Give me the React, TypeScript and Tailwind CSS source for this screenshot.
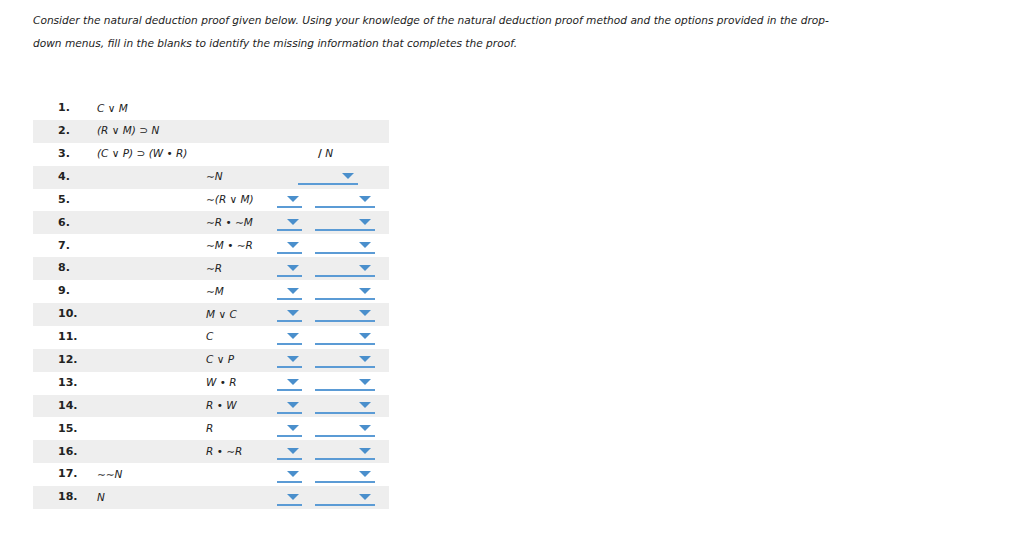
import React from 'react'

type Row = {
  n: number
  a?: string
  b?: string
  kind: 'none' | 'conclusion' | 'single' | 'pair'
}

const rows: Row[] = [
  { n: 1, a: 'C ∨ M', kind: 'none' },
  { n: 2, a: '(R ∨ M) ⊃ N', kind: 'none' },
  { n: 3, a: '(C ∨ P) ⊃ (W • R)', kind: 'conclusion' },
  { n: 4, b: '∼N', kind: 'single' },
  { n: 5, b: '∼(R ∨ M)', kind: 'pair' },
  { n: 6, b: '∼R • ∼M', kind: 'pair' },
  { n: 7, b: '∼M • ∼R', kind: 'pair' },
  { n: 8, b: '∼R', kind: 'pair' },
  { n: 9, b: '∼M', kind: 'pair' },
  { n: 10, b: 'M ∨ C', kind: 'pair' },
  { n: 11, b: 'C', kind: 'pair' },
  { n: 12, b: 'C ∨ P', kind: 'pair' },
  { n: 13, b: 'W • R', kind: 'pair' },
  { n: 14, b: 'R • W', kind: 'pair' },
  { n: 15, b: 'R', kind: 'pair' },
  { n: 16, b: 'R • ∼R', kind: 'pair' },
  { n: 17, a: '∼∼N', kind: 'pair' },
  { n: 18, a: 'N', kind: 'pair' },
]

function Dropdown({ wide, className = '' }: { wide?: boolean; className?: string }) {
  return (
    <div
      className={`flex h-[14px] mt-[2px] justify-end items-start border-b-2 border-[#5b9bd5] ${
        wide ? 'w-[60px] pr-[4px]' : 'w-[25px] pr-[3px]'
      } ${className}`}
    >
      <svg width="12" height="6" viewBox="0 0 12 6" className="mt-[2px]">
        <polygon points="0,0 12,0 6,6" fill="#4a8fcc" />
      </svg>
    </div>
  )
}

export default function App() {
  return (
    <div className="w-[1024px] h-[540px] bg-white text-[#222] font-['DejaVu_Sans',Verdana,sans-serif]">
      <div className="pt-[9px] pl-[33px] text-[10.6px] leading-[23px] italic">
        <p>
          Consider the natural deduction proof given below. Using your knowledge of the natural deduction proof method and the options provided in the drop-
        </p>
        <p>down menus, fill in the blanks to identify the missing information that completes the proof.</p>
      </div>

      <div className="mt-[42px] ml-[33px] w-[356px]">
        {rows.map((r) => (
          <div
            key={r.n}
            className={`flex items-center h-[22.9px] ${r.n % 2 === 0 ? 'bg-[#eeeeee]' : ''}`}
          >
            <div className="w-[64px] pl-[25px] text-[11px] font-bold">{r.n}.</div>
            <div className="w-[109px] text-[10.5px] italic whitespace-nowrap">{r.a ?? ''}</div>
            <div className="w-[71px] text-[10.5px] italic whitespace-nowrap">{r.b ?? ''}</div>
            {r.kind === 'conclusion' && (
              <div className="ml-[41px] text-[10.5px] whitespace-nowrap">
                <span className="font-bold">/</span> <span className="italic">N</span>
              </div>
            )}
            {r.kind === 'single' && <Dropdown wide className="ml-[21px]" />}
            {r.kind === 'pair' && (
              <div className="flex gap-[13px]">
                <Dropdown />
                <Dropdown wide />
              </div>
            )}
          </div>
        ))}
      </div>
    </div>
  )
}
